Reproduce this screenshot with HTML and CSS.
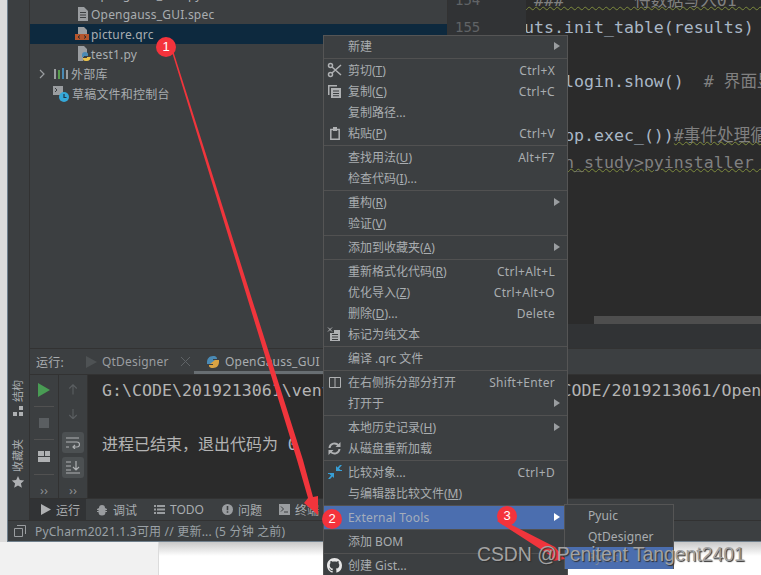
FILE: index.html
```html
<!DOCTYPE html>
<html lang="zh">
<head>
<meta charset="utf-8">
<title>PyCharm</title>
<link rel="stylesheet" href="styles.css">
</head>
<body>
<div class="desk">
  <div class="top-row">
    <div class="edge"></div>
    <div class="window">
      <div class="body">
        <aside class="rail">
          <span class="vlabel">结构</span>
          <svg class="rail-ico" width="12" height="12" viewBox="0 0 12 12"><path fill="#afb1b3" d="M1 7h4v4H1zM7 7h4v4H7zM7 1h4v4H7z"/></svg>
          <span class="vlabel vlabel-fav">收藏夹</span>
          <svg class="rail-ico star" width="14" height="14" viewBox="0 0 14 14"><path fill="#afb1b3" d="M7 1l1.800 4.100 4.400.4-3.300 2.900 1 4.400L7 10.500l-3.900 2.300 1-4.400L.8 5.500l4.400-.4z"/></svg>
        </aside>
        <div class="content">
          <div class="top">
            <section class="tree">
              <div class="row row-file"><svg class="fi" width="16" height="16" viewBox="0 0 16 16"><circle cx="10" cy="10" r="4" fill="#d9a343"/></svg><span>Opengauss_GUI.py</span></div>
              <div class="row row-file"><svg class="fi" width="16" height="16" viewBox="0 0 16 16"><path fill="#9a9da0" d="M3 1h6l4 4v10H3z"/><path fill="#3c3f41" d="M5 6h6v1H5zM5 8.500h6v1H5zM5 11h6v1H5z"/></svg><span>Opengauss_GUI.spec</span></div>
              <div class="row row-file row-sel"><svg class="fi fi-wide" width="18" height="16" viewBox="0 0 18 16"><path fill="#9a9da0" d="M5 1h6l3 3v4H5z"/><path fill="#b4552d" d="M2 8h14v6H2z"/><path fill="none" stroke="#2b2b2b" d="M7 9.500l-2 1.500 2 1.500M11 9.500l2 1.500-2 1.500"/></svg><span>picture.qrc</span></div>
              <div class="row row-file"><svg class="fi" width="16" height="16" viewBox="0 0 16 16"><path fill="#9a9da0" d="M3 0h6l3 3v5H8v7H3z"/><path fill="#4a8ab5" d="M7 9c0-2 1-3 3-3s3 1 3 2v2H9v1H7z"/><path fill="#e8c14a" d="M16 10c0 3-2 5-4 5s-4 0-4-2v-1h4v-1h4z"/></svg><span>test1.py</span></div>
              <div class="row row-lib"><svg class="chev" width="8" height="10" viewBox="0 0 8 10"><path fill="none" stroke="#9a9da0" stroke-width="1.200" d="M2 1l4 4-4 4"/></svg><svg class="li" width="16" height="12" viewBox="0 0 16 12"><path fill="#9a9da0" d="M1 1h2v10H1z"/><path fill="#5a9e4f" d="M5 2h2v9H5z"/><path fill="#4a8ab5" d="M9 0h2v11H9z"/><path fill="#9a9da0" d="M13 2h2v9h-2z"/></svg><span>外部库</span></div>
              <div class="row row-lib row-scratch"><svg class="li" width="16" height="16" viewBox="0 0 16 16"><path fill="#9a9da0" d="M0 0h10v9H0z"/><path fill="none" stroke="#3c3f41" d="M2 2l2 2-2 2"/><circle cx="11" cy="11" r="5" fill="#35a8d8"/><path fill="none" stroke="#20364a" stroke-width="1.200" d="M11 8v3.500h2.500"/></svg><span>草稿文件和控制台</span></div>
            </section>
            <div class="gutter">
              <div class="ln">154</div>
              <div class="ln">155</div>
            </div>
            <div class="editor-col">
              <div class="editor">
                <pre class="code"><span class="warn"> ###       待数据写入01                         </span>
<span class="kw">uts.init_table(results)</span>

<span class="kw">    login.show()  </span><span class="cm"># 界面显示</span>

<span class="kw">   app.exec_())</span><span class="warn">#事件处理循环                </span>
<span class="warn">    n_study&gt;pyinstaller                         </span></pre>
                <div class="hscroll"><div class="thumb"></div></div>
              </div>
              <div class="strip"></div>
            </div>
          </div>
          <section class="run">
            <header class="run-head">
              <span class="run-label">运行:</span>
              <div class="rtab rtab-qt">
                <svg width="11" height="12" viewBox="0 0 11 12"><path fill="#4e5254" d="M0 0l11 6-11 6z"/></svg>
                <span class="dim">QtDesigner</span>
                <svg class="close" width="9" height="9" viewBox="0 0 9 9"><path stroke="#5f6366" d="M0 0l9 9M9 0l-9 9"/></svg>
              </div>
              <div class="rtab rtab-on">
                <svg width="14" height="14" viewBox="0 0 14 14"><path fill="#4a8ab5" d="M1 7c0-3 2-6 6-6s4 2 4 3H7v1h3L5 9H1z"/><path fill="#d9a343" d="M13 7c0 3-2 6-6 6s-4-2-4-3h4V9H4l5-4h4z"/></svg>
                <span>OpenGauss_GUI</span>
              </div>
            </header>
            <div class="run-body">
              <div class="tools tools-a">
                <svg class="t-play" width="12" height="14" viewBox="0 0 12 14"><path fill="#499c54" d="M0 0l12 7-12 7z"/></svg>
                <i class="t-sep"></i>
                <i class="t-stop"></i>
                <i class="t-sep"></i>
                <svg class="t-lay" width="14" height="12" viewBox="0 0 14 12"><path fill="#afb1b3" d="M0 0h6v5H0zM7 0h5v5H7zM0 6h12v5H0z" transform="translate(1)"/></svg>
                <i class="t-sep"></i>
                <span class="more">››</span>
              </div>
              <div class="tools tools-b">
                <svg class="t-arr" width="12" height="14" viewBox="0 0 12 14"><path fill="none" stroke="#5a5e61" stroke-width="1.500" d="M6 14V1M1 6l5-5 5 5"/></svg>
                <svg class="t-arr" width="12" height="14" viewBox="0 0 12 14"><path fill="none" stroke="#5a5e61" stroke-width="1.500" d="M6 0v13M1 8l5 5 5-5"/></svg>
                <div class="t-btn"><svg width="14" height="12" viewBox="0 0 14 12"><path fill="none" stroke="#afb1b3" stroke-width="1.200" d="M0 1h13M0 5h11a2 2 0 010 5H7M9 8l-2 2 2 2M0 10h3"/></svg></div>
                <div class="t-btn"><svg width="14" height="13" viewBox="0 0 14 13"><path fill="none" stroke="#afb1b3" stroke-width="1.200" d="M0 1h5M0 5h5M0 9h5M0 12h14M10 0v9M7 6l3 3 3-3"/></svg></div>
                <span class="more">››</span>
              </div>
              <div class="console">
                <pre class="out">G:\CODE\2019213061\venv\Scripts\python.exe G:/CODE/2019213061/Opengauss_GUI.py</pre>
                <pre class="out out-end">进程已结束，退出代码为 <span class="zero">0</span></pre>
              </div>
            </div>
          </section>
          <nav class="tabs">
            <div class="tab tab-on"><svg width="10" height="11" viewBox="0 0 10 11"><path fill="#afb1b3" d="M0 0l10 5.500L0 11z"/></svg><span>运行</span></div>
            <div class="tab tab-wide"><svg width="12" height="12" viewBox="0 0 12 12"><path fill="#9a9da0" d="M3 4a3 3 0 016 0l2 1v1H9.500v1H11v1H9.500A3.500 3.500 0 016 11.500 3.500 3.500 0 012.500 8H1V7h1.500V6H1V5z"/></svg><span>调试</span></div>
            <div class="tab tab-todo"><svg width="11" height="9" viewBox="0 0 11 9"><path fill="#9a9da0" d="M0 0h2v2H0zM3 0h8v2H3zM0 3.500h2v2H0zM3 3.500h8v2H3zM0 7h2v2H0zM3 7h8v2H3z"/></svg><span>TODO</span></div>
            <div class="tab"><svg width="11" height="11" viewBox="0 0 11 11"><circle cx="5.500" cy="5.500" r="5.500" fill="#9a9da0"/><path fill="#3c3f41" d="M4.700 2h1.600v4.200H4.700zM4.700 7.200h1.600v1.600H4.700z"/></svg><span>问题</span></div>
            <div class="tab"><svg width="11" height="11" viewBox="0 0 11 11"><path fill="#9a9da0" d="M0 0h11v11H0z"/><path fill="none" stroke="#3c3f41" d="M2 2.500l2.500 2.500L2 7.500M5 8h4"/></svg><span>终端</span></div>
          </nav>
        </div>
      </div>
      <footer class="status">
        <svg width="12" height="12" viewBox="0 0 12 12"><path fill="none" stroke="#9a9da0" d="M3 .5h8.500V9M.5 3.500h8v8h-8z"/></svg>
        <span>PyCharm2021.1.3可用 // 更新... (5 分钟 之前)</span>
      </footer>
    </div>
  </div>
  <div class="below">
    <div class="below-left"></div>
    <div class="below-right"></div>
  </div>

  <div class="menu">
    <div class="mi"><span class="ic"></span><span class="lb">新建</span><i class="tri"></i></div>
    <hr>
    <div class="mi"><span class="ic"><svg width="16" height="16" viewBox="0 0 16 16"><g fill="none" stroke="#afb1b3" stroke-width="1.500"><circle cx="3.500" cy="3.500" r="2"/><circle cx="3.500" cy="12.500" r="2"/><path d="M5 5l9 8M5 11l9-8"/></g></svg></span><span class="lb">剪切(<u>T</u>)</span><span class="sc">Ctrl+X</span></div>
    <div class="mi"><span class="ic"><svg width="13" height="13" viewBox="0 0 13 13"><path fill="#afb1b3" d="M0 0h9v1.500H1.500V10H0z"/><path fill="#afb1b3" d="M3 3h10v10H3z"/><path fill="#3c3f41" d="M5 5.500h6v1H5zM5 8h6v1H5zM5 10.300h6v1H5z"/></svg></span><span class="lb">复制(<u>C</u>)</span><span class="sc">Ctrl+C</span></div>
    <div class="mi"><span class="ic"></span><span class="lb">复制路径...</span></div>
    <div class="mi"><span class="ic"><svg width="10" height="13" viewBox="0 0 10 13"><path fill="none" stroke="#afb1b3" stroke-width="1.500" d="M.8 2.500h8.400v9.700H.8z"/><path fill="#afb1b3" d="M3 0h4v4H3z"/></svg></span><span class="lb">粘贴(<u>P</u>)</span><span class="sc">Ctrl+V</span></div>
    <hr>
    <div class="mi"><span class="ic"></span><span class="lb">查找用法(<u>U</u>)</span><span class="sc">Alt+F7</span></div>
    <div class="mi"><span class="ic"></span><span class="lb">检查代码(<u>I</u>)...</span></div>
    <hr>
    <div class="mi"><span class="ic"></span><span class="lb">重构(<u>R</u>)</span><i class="tri"></i></div>
    <div class="mi"><span class="ic"></span><span class="lb">验证(<u>V</u>)</span></div>
    <hr>
    <div class="mi"><span class="ic"></span><span class="lb">添加到收藏夹(<u>A</u>)</span><i class="tri"></i></div>
    <hr>
    <div class="mi"><span class="ic"></span><span class="lb">重新格式化代码(<u>R</u>)</span><span class="sc">Ctrl+Alt+L</span></div>
    <div class="mi"><span class="ic"></span><span class="lb">优化导入(<u>Z</u>)</span><span class="sc">Ctrl+Alt+O</span></div>
    <div class="mi"><span class="ic"></span><span class="lb">删除(<u>D</u>)...</span><span class="sc">Delete</span></div>
    <div class="mi"><span class="ic ic-l"><svg width="13" height="14" viewBox="0 0 13 14"><path fill="#afb1b3" d="M3 3h10v11H3z"/><path fill="#3c3f41" d="M5 7h6v1H5zM5 9.500h6v1H5zM5 12h6v1H5z"/><path fill="#3c3f41" d="M0 0h7v6H0z"/><path stroke="#afb1b3" d="M1 .5l4 4M5 .5l-4 4"/></svg></span><span class="lb">标记为纯文本</span></div>
    <hr>
    <div class="mi"><span class="ic"></span><span class="lb">编译 .qrc 文件</span></div>
    <hr>
    <div class="mi"><span class="ic"><svg width="12" height="11" viewBox="0 0 12 11"><path fill="none" stroke="#afb1b3" d="M.5.500h11v10H.5zM6 .500v10"/></svg></span><span class="lb">在右侧拆分部分打开</span><span class="sc">Shift+Enter</span></div>
    <div class="mi"><span class="ic"></span><span class="lb">打开于</span><i class="tri"></i></div>
    <hr>
    <div class="mi"><span class="ic"></span><span class="lb">本地历史记录(<u>H</u>)</span><i class="tri"></i></div>
    <div class="mi"><span class="ic"><svg width="13" height="13" viewBox="0 0 13 13"><path fill="none" stroke="#afb1b3" stroke-width="2" d="M1.500 6a5 5 0 019-2.500M11.500 7a5 5 0 01-9 2.500"/><path fill="#afb1b3" d="M12.500 0v5h-5zM.5 13V8h5z"/></svg></span><span class="lb">从磁盘重新加载</span></div>
    <hr>
    <div class="mi"><span class="ic"><svg width="14" height="14" viewBox="0 0 14 14"><path fill="#389fd6" d="M8 6V1l1.500 1.500L12 0l2 0-3 3.500L12.500 5H14v1zM6 8v5l-1.500-1.500L2 14H0l3-3.500L1.500 9H0V8z"/></svg></span><span class="lb">比较对象...</span><span class="sc">Ctrl+D</span></div>
    <div class="mi"><span class="ic"></span><span class="lb">与编辑器比较文件(<u>M</u>)</span></div>
    <hr>
    <div class="mi mi-on"><span class="ic"></span><span class="lb">External Tools</span><i class="tri tri-w"></i></div>
    <hr>
    <div class="mi"><span class="ic"></span><span class="lb">添加 BOM</span></div>
    <hr>
    <div class="mi"><span class="ic"><svg width="15" height="15" viewBox="0 0 16 16"><path fill="#e6e6e6" d="M8 0C3.580 0 0 3.580 0 8c0 3.540 2.290 6.530 5.470 7.590.4.070.55-.17.55-.38 0-.19-.01-.82-.01-1.490-2.010.37-2.530-.49-2.690-.94-.09-.23-.48-.94-.82-1.130-.28-.15-.68-.52-.01-.53.63-.01 1.080.58 1.230.82.72 1.210 1.870.87 2.330.66.07-.52.28-.87.51-1.070-1.780-.2-3.640-.89-3.640-3.950 0-.87.31-1.590.82-2.150-.08-.2-.36-1.020.08-2.120 0 0 .67-.21 2.200.82.64-.18 1.320-.27 2-.27.68 0 1.360.09 2 .27 1.530-1.040 2.200-.82 2.200-.82.44 1.100.16 1.920.08 2.120.51.56.82 1.270.82 2.150 0 3.070-1.870 3.750-3.650 3.950.29.25.54.73.54 1.480 0 1.070-.01 1.930-.01 2.200 0 .21.15.46.55.38A8.013 8.013 0 0016 8c0-4.420-3.580-8-8-8z"/></svg></span><span class="lb">创建 Gist...</span></div>
  </div>

  <div class="submenu">
    <div class="si">Pyuic</div>
    <div class="si">QtDesigner</div>
    <div class="si si-on">Pyrcc</div>
  </div>

  <svg class="marks" width="761" height="575" viewBox="0 0 761 575">
    <path fill="#f0353c" d="M172 52h1.500L303 460l10 37 5-1v19l-14-12 4-5-11-38z"/>
    <path fill="#f0353c" d="M497 521l3-2 55 28 10 12-12 2-2-5z"/>
  </svg>
  <span class="badge badge-1">1</span>
  <span class="badge badge-2">2</span>
  <span class="badge badge-3">3</span>
  <span class="mark">CSDN @Penitent Tangent2401</span>
</div>
</body>
</html>
```
FILE: styles.css
```css
* { box-sizing: border-box; }
html, body { margin: 0; padding: 0; background: #fff; }
body { width: 761px; height: 575px; overflow: hidden; font-family: "Noto Sans", "Noto Sans CJK SC", sans-serif; }
.desk { position: relative; width: 761px; height: 575px; display: flex; flex-direction: column; overflow: hidden; }
.top-row { height: 542px; display: flex; flex: none; }
.edge { width: 7px; background: #dcdcdc; flex: none; }
.window { flex: 1; min-width: 0; display: flex; flex-direction: column; background: #3c3f41; border-left: 1px solid #6f7f8c; border-bottom: 1px solid #6f7f8c; }
.body { flex: 1; min-height: 0; display: flex; }
.rail { width: 22px; flex: none; display: flex; flex-direction: column; align-items: center; justify-content: flex-end; padding: 0 1px 31px 0; border-right: 1px solid #323232; color: #a9adb0; font-size: 11px; }
.vlabel { writing-mode: vertical-rl; text-orientation: sideways; transform: rotate(180deg); line-height: 14px; }
.vlabel-fav { margin-top: 22px; }
.rail-ico { margin-top: 3px; }
.content { flex: 1; min-width: 0; display: flex; flex-direction: column; }
.top { height: 349px; flex: none; display: flex; border-bottom: 1px solid #323232; overflow: hidden; }
.tree { width: 418px; flex: none; border-right: 1px solid #323232; margin-top: -16px; color: #a9adb0; font-size: 12px; letter-spacing: .2px; }
.row { height: 20px; display: flex; align-items: center; white-space: nowrap; }
.row-file { padding-left: 45px; }
.row-sel { background: #0d293e; }
.fi { flex: none; }
.fi-wide { margin-left: -2px; }
.row-lib { padding-left: 8px; }
.chev { margin-right: 7px; }
.li { margin-right: 2px; }
.row-scratch { padding-left: 23px; }
.row-scratch .li { margin-right: 3px; }
.gutter { width: 78px; flex: none; background: #313335; margin-top: -13px; padding-left: 7px; color: #606366; font: 14px/27px "DejaVu Sans Mono", monospace; }
.ln { height: 27px; }
.editor-col { flex: 1; min-width: 0; display: flex; flex-direction: column; }
.editor { height: 324px; flex: none; background: #2b2b2b; position: relative; overflow: hidden; }
.code { margin: -13px 0 0 -2px; font: 16.6px/27px "DejaVu Sans Mono", "Noto Sans CJK SC", monospace; color: #a9b7c6; white-space: pre; }
.warn { color: #808080; text-decoration: underline wavy #7d8a3c 1px; text-underline-offset: 0; }
.cm { color: #808080; }
.kw { color: #a9b7c6; }
.hscroll { position: absolute; left: 68px; right: 0; bottom: 0; height: 8px; }
.thumb { width: 100%; height: 100%; background: #4e4e4e; }
.strip { flex: 1; background: #313335; }
.run { flex: 1; min-height: 0; display: flex; flex-direction: column; }
.run-head { height: 26px; flex: none; display: flex; align-items: center; padding-left: 6px; color: #a9adb0; font-size: 12px; letter-spacing: .2px; border-bottom: 1px solid #323232; }
.run-label { width: 50px; }
.rtab { height: 25px; display: flex; align-items: center; gap: 5px; }
.rtab-qt { width: 108px; }
.close { margin-left: 7px; }
.dim { color: #9a9da0; }
.rtab-on { width: 129px; padding-left: 12px; border-bottom: 3px solid #686e72; padding-top: 3px; }
.run-body { flex: 1; min-height: 0; display: flex; }
.tools { width: 29px; flex: none; display: flex; flex-direction: column; align-items: center; border-right: 1px solid #323232; padding-top: 8px; position: relative; }
.t-play { margin-bottom: 9px; }
.t-sep { display: block; width: 20px; height: 1px; background: #515151; }
.t-stop { display: block; width: 10px; height: 10px; background: #5a5e61; margin: 11px 0; }
.t-lay { margin: 11px 0; }
.more { color: #8a8d90; font-size: 13px; line-height: 16px; margin-top: 7px; }
.t-arr { margin: 1px 0 13px; }
.t-btn { width: 22px; height: 21px; flex: none; background: #4c5052; border-radius: 3px; margin-bottom: 4px; display: flex; align-items: center; justify-content: center; }
.tools-b .more { margin-top: 0; }
.console { flex: 1; min-width: 0; background: #2b2b2b; padding: 2px 0 0 14px; overflow: hidden; }
.out { margin: 0; font: 16.6px/27px "DejaVu Sans Mono", "Noto Sans CJK SC", monospace; color: #b4b4b4; white-space: pre; }
.out-end { margin-top: 27px; font-size: 16px; }
.zero { color: #a9b7c6; }
.tabs { height: 22px; flex: none; display: flex; font-size: 12px; color: #a9adb0; border-top: 1px solid #323232; }
.tab { width: 57px; flex: none; display: flex; align-items: center; gap: 5px; padding-left: 10px; }
.tab-wide { width: 58px; }
.tab-todo { width: 68px; }
.tab-on { background: #313335; padding-left: 11px; width: 56px; }
.status { height: 21px; flex: none; display: flex; align-items: center; gap: 9px; padding-left: 6px; font-size: 12px; letter-spacing: .2px; color: #9aa1a6; border-top: 1px solid #323232; }
.below { flex: 1; display: flex; }
.below-left { width: 159px; background: #f1f1f1; border-right: 1px solid #dcdcdc; }
.below-right { flex: 1; background: linear-gradient(#c8c8c8, #fff 14px); }
.menu { position: absolute; left: 323px; top: 35px; width: 245px; height: 545px; background: #3c3f41; border: 1px solid #555; color: #a9adb0; font-size: 12px; }
.menu hr { margin: 1px 0; border: 0; height: 1px; background: #515151; }
.mi { height: 21px; display: flex; align-items: center; padding: 0 12px 1px 0; white-space: nowrap; }
.ic { width: 24px; flex: none; display: flex; justify-content: center; align-items: center; padding-right: 3px; }
.ic-l { padding-right: 5px; }
.lb { flex: 1; min-width: 0; }
.lb u { text-underline-offset: 1px; }
.sc { color: #a9adb0; letter-spacing: .3px; }
.tri { width: 0; height: 0; border-left: 6px solid #9a9da0; border-top: 4px solid transparent; border-bottom: 4px solid transparent; margin-right: -5px; }
.tri-w { border-left-color: #fff; }
.mi-on { background: #4b6eaf; color: #a4adbb; margin: -1px 0; height: 23px; letter-spacing: .2px; }
.submenu { position: absolute; left: 564px; top: 504px; width: 110px; height: 65px; background: #3c3f41; border: 1px solid #555; color: #a9adb0; font-size: 12px; letter-spacing: .1px; }
.si { height: 21px; line-height: 21px; padding-left: 23px; }
.si-on { background: #4b6eaf; height: 22px; color: #7c8798; }
.marks { position: absolute; left: 0; top: 0; pointer-events: none; }
.badge { position: absolute; width: 20px; height: 20px; border-radius: 50%; background: #f4333c; color: #fff; font: 13px/20px "Liberation Sans", sans-serif; text-align: center; }
.badge-1 { left: 156px; top: 37px; }
.badge-2 { left: 322px; top: 509px; }
.badge-3 { left: 497px; top: 506px; }
.mark { position: absolute; left: 477px; top: 543px; font: 19.35px/22px "Liberation Sans", sans-serif; color: #a3a3a3; text-shadow: 1px 1px 1px #2f2f2f; white-space: nowrap; }
```
